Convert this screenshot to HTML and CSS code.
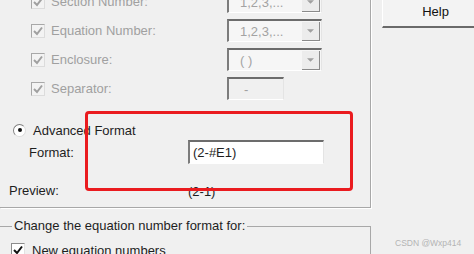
FILE: index.html
```html
<!DOCTYPE html>
<html lang="en">
<head>
  <meta charset="UTF-8" />
  <title>Equation Numbering Format</title>
  <link rel="stylesheet" href="styles.css">
</head>
<body>
  <div class="dialog">
    <div class="main">
      <div class="group numbering">
        <div class="opt-rows">
          <div class="opt-row">
            <span class="check disabled"><svg viewBox="0 0 12 12"><path d="M2 6 L5 9 L10 2.5" /></svg></span>
            <span class="opt-label">Section Number:</span>
            <span class="combo"><span class="combo-text">1,2,3,...</span><span class="combo-btn"><svg viewBox="0 0 8 4"><path d="M0 0 H8 L4 4 Z" /></svg></span></span>
          </div>
          <div class="opt-row">
            <span class="check disabled"><svg viewBox="0 0 12 12"><path d="M2 6 L5 9 L10 2.5" /></svg></span>
            <span class="opt-label">Equation Number:</span>
            <span class="combo"><span class="combo-text">1,2,3,...</span><span class="combo-btn"><svg viewBox="0 0 8 4"><path d="M0 0 H8 L4 4 Z" /></svg></span></span>
          </div>
          <div class="opt-row">
            <span class="check disabled"><svg viewBox="0 0 12 12"><path d="M2 6 L5 9 L10 2.5" /></svg></span>
            <span class="opt-label">Enclosure:</span>
            <span class="combo"><span class="combo-text">( )</span><span class="combo-btn"><svg viewBox="0 0 8 4"><path d="M0 0 H8 L4 4 Z" /></svg></span></span>
          </div>
          <div class="opt-row">
            <span class="check disabled"><svg viewBox="0 0 12 12"><path d="M2 6 L5 9 L10 2.5" /></svg></span>
            <span class="opt-label">Separator:</span>
            <span class="textbox small disabled">-</span>
          </div>
        </div>

        <div class="adv-row">
          <span class="radio"><span class="radio-dot"></span></span>
          <span>Advanced Format</span>
        </div>
        <div class="format-row">
          <span class="format-label">Format:</span>
          <span class="textbox wide">(2-#E1)</span>
        </div>
        <div class="preview-row">
          <span class="preview-label">Preview:</span>
          <span class="preview-value">(2-1)</span>
        </div>
      </div>

      <fieldset class="group apply">
        <legend>Change the equation number format for:</legend>
        <div class="apply-row">
          <span class="check"><svg viewBox="0 0 12 12"><path d="M2 6 L5 9 L10 2.5" /></svg></span>
          <span>New equation numbers</span>
        </div>
      </fieldset>
    </div>

    <div class="side">
      <button class="help">Help</button>
    </div>
  </div>

  <div class="highlight"></div>
  <div class="watermark">CSDN @Wxp414</div>
</body>
</html>
```

FILE: styles.css
```css
body {
  margin: 0;
  width: 474px;
  height: 254px;
  overflow: hidden;
  position: relative;
  background: #f0f0f0;
  font-family: 'Liberation Sans', Arial, sans-serif;
  font-size: 13px;
  color: #1e1e1e;
}

.dialog {
  display: flex;
  height: 100%;
}

.main {
  width: 371px;
  flex-shrink: 0;
}

/* first group box, top and left edges are off screen */
.numbering {
  margin-top: -13px;
  padding-bottom: 7px;
  border-right: 1px solid #a8a8a8;
  border-bottom: 1px solid #a8a8a8;
  box-shadow: 1px 1px 0 #fff;
}

.opt-rows {
  padding-left: 31px;
}

.opt-row {
  display: flex;
  align-items: center;
  height: 29px;
}

.opt-label {
  width: 176px;
  margin-left: 6px;
  color: #a0a0a0;
}

.check {
  width: 12px;
  height: 12px;
  border: 1px solid #8c8c8c;
  border-right-color: #e2e2e2;
  border-bottom-color: #e2e2e2;
  background: #fff;
  display: flex;
}
.check svg {
  width: 12px;
  height: 12px;
  fill: none;
  stroke: #111;
  stroke-width: 2;
}
.check.disabled {
  background: #f3f3f3;
  border-color: #a8a8a8 #dcdcdc #dcdcdc #a8a8a8;
}
.check.disabled svg {
  stroke: #a0a0a0;
}

.combo {
  display: flex;
  align-items: center;
  width: 92px;
  height: 20px;
  border-top: 2px solid #6c6c6c;
  border-left: 2px solid #7c7c7c;
  border-right: 1px solid #e4e4e4;
  border-bottom: 1px solid #fff;
  background: #f6f6f6;
}
.combo-text {
  flex: 1;
  padding-left: 11px;
  color: #a3a3a3;
}
.combo-btn {
  width: 17px;
  height: 18px;
  margin-right: 1px;
  display: flex;
  align-items: center;
  justify-content: center;
  background: #ececec;
  border-right: 1px solid #8a8a8a;
  border-bottom: 1px solid #8a8a8a;
}
.combo-btn svg {
  width: 7px;
  height: 4px;
  fill: #a0a0a0;
}

.textbox {
  display: flex;
  align-items: center;
  box-sizing: border-box;
  border-top: 2px solid #6c6c6c;
  border-left: 2px solid #7c7c7c;
  border-right: 1px solid #e4e4e4;
  border-bottom: 1px solid #fff;
  background: #fff;
}
.textbox.small {
  width: 57px;
  height: 23px;
  padding-left: 15px;
}
.textbox.disabled {
  background: #f0f0f0;
  color: #a0a0a0;
}
.textbox.wide {
  width: 136px;
  height: 24px;
  padding-left: 3px;
}

.adv-row {
  display: flex;
  align-items: center;
  height: 20px;
  margin-top: 17px;
  padding-left: 13px;
  gap: 7px;
}

.radio {
  width: 11px;
  height: 11px;
  border: 1px solid #808080;
  border-right-color: #dcdcdc;
  border-bottom-color: #dcdcdc;
  border-radius: 50%;
  background: #fff;
  display: flex;
  align-items: center;
  justify-content: center;
}
.radio-dot {
  width: 4px;
  height: 4px;
  border-radius: 50%;
  background: #111;
}

.format-row {
  display: flex;
  align-items: center;
  height: 24px;
  padding-left: 29px;
}
.format-label {
  width: 159px;
}

.preview-row {
  display: flex;
  align-items: center;
  height: 20px;
  margin-top: 16px;
  padding-left: 9px;
}
.preview-label {
  width: 179px;
}
.preview-value {
  padding-top: 2px;
}

/* second group box */
.apply {
  margin: 10px 0 0 -2px;
  padding: 0 0 0 13px;
  border: 1px solid #a8a8a8;
  border-bottom: none;
  min-width: 0;
}
.apply legend {
  padding: 0 2px;
  line-height: 16px;
}
.apply-row {
  display: flex;
  align-items: center;
  gap: 7px;
  height: 16px;
  margin-top: 8px;
  margin-left: -1px;
}

.side {
  flex: 1;
  padding-left: 11px;
}

.help {
  display: block;
  width: 106px;
  height: 32px;
  margin-top: -4px;
  padding: 0;
  font: inherit;
  color: #111;
  background: #f3f3f3;
  border: none;
  border-left: 1px solid #fff;
  border-bottom: 2px solid #6a6a6a;
}

.highlight {
  position: absolute;
  left: 85px;
  top: 111px;
  width: 262px;
  height: 74px;
  border: 3px solid #ea1b1f;
  border-radius: 4px;
}

.watermark {
  position: absolute;
  left: 395px;
  top: 238px;
  font-size: 8.5px;
  color: #b4b4b4;
}
```
